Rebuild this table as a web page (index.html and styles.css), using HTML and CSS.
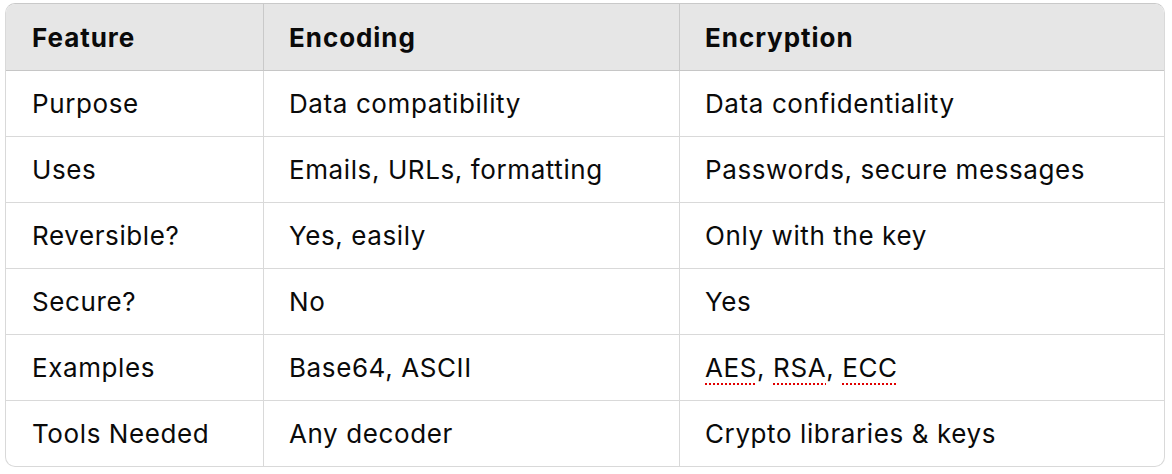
FILE: index.html
```html
<!DOCTYPE html>
<html lang="en">
<head>
<meta charset="utf-8">
<title>Encoding vs Encryption</title>
<link rel="stylesheet" href="styles.css">
</head>
<body>
<div class="table">
  <div class="row head">
    <div class="cell"><span>Feature</span></div>
    <div class="cell"><span>Encoding</span></div>
    <div class="cell"><span>Encryption</span></div>
  </div>
  <div class="row">
    <div class="cell"><span>Purpose</span></div>
    <div class="cell"><span>Data compatibility</span></div>
    <div class="cell"><span>Data confidentiality</span></div>
  </div>
  <div class="row">
    <div class="cell"><span>Uses</span></div>
    <div class="cell"><span>Emails, URLs, formatting</span></div>
    <div class="cell"><span>Passwords, secure messages</span></div>
  </div>
  <div class="row">
    <div class="cell"><span>Reversible?</span></div>
    <div class="cell"><span>Yes, easily</span></div>
    <div class="cell"><span>Only with the key</span></div>
  </div>
  <div class="row">
    <div class="cell"><span>Secure?</span></div>
    <div class="cell"><span>No</span></div>
    <div class="cell"><span>Yes</span></div>
  </div>
  <div class="row">
    <div class="cell"><span>Examples</span></div>
    <div class="cell"><span>Base64, ASCII</span></div>
    <div class="cell"><span><span class="spell">AES</span>, <span class="spell">RSA</span>, <span class="spell">ECC</span></span></div>
  </div>
  <div class="row last">
    <div class="cell"><span>Tools Needed</span></div>
    <div class="cell"><span>Any decoder</span></div>
    <div class="cell"><span>Crypto libraries &amp; keys</span></div>
  </div>
</div>
</body>
</html>
```

FILE: styles.css
```css
html, body {
  margin: 0;
  padding: 0;
  background: #ffffff;
}

body {
  padding: 3px 7px 0 5px;
  font-family: Inter, "Noto Sans", "Liberation Sans", sans-serif;
  color: #0a0a0a;
  font-size: 26px;
  letter-spacing: 0.6px;
}

.table {
  width: 1160px;
  box-sizing: border-box;
  border: 1px solid #d9d9d9;
  border-top-color: #c9c9c9;
  border-radius: 10px;
  overflow: hidden;
}

.row {
  display: grid;
  grid-template-columns: 257px 416px 1fr;
  height: 66px;
  border-bottom: 1px solid #d9d9d9;
  box-sizing: border-box;
}

.row.head {
  height: 67px;
  background: #e6e6e6;
  border-bottom-color: #c6c6c6;
  font-weight: 700;
  letter-spacing: 0.95px;
}

.row.head .cell {
  border-left-color: #c9c9c9;
}

.row.last {
  border-bottom: none;
  height: 65px;
}

.cell {
  display: flex;
  align-items: center;
  padding-left: 25px;
  border-left: 1px solid #d9d9d9;
  white-space: nowrap;
}

.cell:first-child {
  border-left: none;
  padding-left: 26px;
}

.spell {
  text-decoration: underline dotted #e00000;
  text-decoration-thickness: 2px;
  text-underline-offset: 6px;
}
```
